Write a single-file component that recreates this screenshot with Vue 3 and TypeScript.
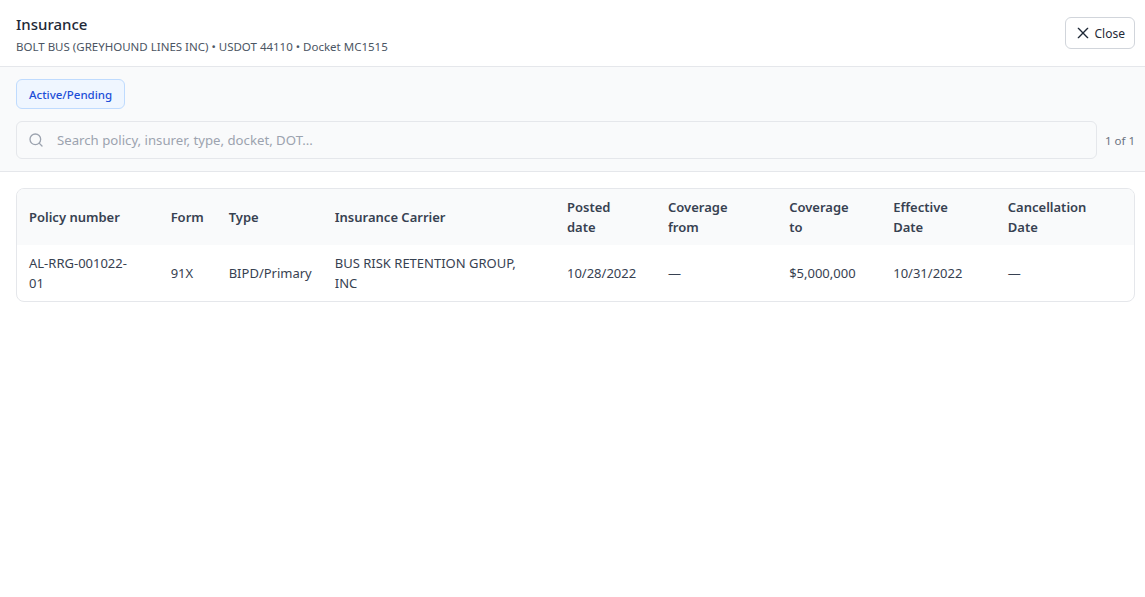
<template>
  <div class="panel">
    <header class="header">
      <div class="titles">
        <h2>Insurance</h2>
        <p>BOLT BUS (GREYHOUND LINES INC) • USDOT 44110 • Docket MC1515</p>
      </div>
      <button class="close-btn" type="button">
        <svg width="16" height="16" viewBox="0 0 24 24" fill="none" stroke="currentColor" stroke-width="2" stroke-linecap="round">
          <path d="M5 5l14 14M19 5L5 19" />
        </svg>
        Close
      </button>
    </header>

    <section class="filters">
      <button class="chip" type="button">Active/Pending</button>
      <div class="search-row">
        <label class="search">
          <svg width="16" height="16" viewBox="0 0 24 24" fill="none" stroke="currentColor" stroke-width="2" stroke-linecap="round">
            <circle cx="11" cy="11" r="8" />
            <path d="M21 21l-4.3-4.3" />
          </svg>
          <input type="text" placeholder="Search policy, insurer, type, docket, DOT..." />
        </label>
        <span class="count">1 of 1</span>
      </div>
    </section>

    <section class="content">
      <div class="table-wrap">
        <table>
          <colgroup>
            <col v-for="c in columns" :key="c.label" :style="{ width: c.width + 'px' }" />
          </colgroup>
          <thead>
            <tr>
              <th v-for="c in columns" :key="c.label">{{ c.label }}</th>
            </tr>
          </thead>
          <tbody>
            <tr v-for="row in rows" :key="row[0]">
              <td v-for="(cell, i) in row" :key="i">{{ cell }}</td>
            </tr>
          </tbody>
        </table>
      </div>
    </section>
  </div>
</template>

<script setup lang="ts">
const columns = [
  { label: 'Policy number', width: 141.5 },
  { label: 'Form', width: 58 },
  { label: 'Type', width: 106 },
  { label: 'Insurance Carrier', width: 232 },
  { label: 'Posted\ndate', width: 101 },
  { label: 'Coverage\nfrom', width: 121 },
  { label: 'Coverage\nto', width: 104 },
  { label: 'Effective\nDate', width: 114.5 },
  { label: 'Cancellation\nDate', width: 138 }
]

const rows = [
  [
    'AL-RRG-001022-\n01',
    '91X',
    'BIPD/Primary',
    'BUS RISK RETENTION GROUP,\nINC',
    '10/28/2022',
    '—',
    '$5,000,000',
    '10/31/2022',
    '—'
  ]
]
</script>

<style>
html,
body {
  background: #fff;
}
</style>

<style scoped>
.panel {
  font-family: "Noto Sans", "Liberation Sans", sans-serif;
  color: #1f2937;
  background: #fff;
}

.header {
  display: flex;
  justify-content: space-between;
  align-items: center;
  height: 66px;
  padding: 0 10px 0 16px;
  border-bottom: 1px solid #e5e7eb;
}

.titles {
  padding-top: 2px;
}

.titles h2 {
  margin: 0 0 5px;
  font-size: 15px;
  line-height: 20px;
  font-weight: 500;
  color: #1f2937;
}

.titles p {
  margin: 0;
  font-size: 11.5px;
  line-height: 16px;
  color: #4b5563;
}

.close-btn {
  display: flex;
  align-items: center;
  gap: 4px;
  height: 32px;
  padding: 0 9px;
  font: inherit;
  font-size: 12px;
  color: #1f2937;
  background: #fff;
  border: 1px solid #d1d5db;
  border-radius: 6px;
}

.filters {
  padding: 12px 10px 12px 16px;
  background: #f9fafb;
  border-bottom: 1px solid #e5e7eb;
}

.chip {
  display: block;
  height: 30px;
  padding: 0 12px;
  font: inherit;
  font-size: 11.5px;
  font-weight: 500;
  color: #1d4ed8;
  background: #eff6ff;
  border: 1px solid #bfdbfe;
  border-radius: 6px;
}

.search-row {
  display: flex;
  align-items: center;
  gap: 8px;
  margin-top: 12px;
}

.search {
  flex: 1;
  display: flex;
  align-items: center;
  gap: 13px;
  height: 38px;
  box-sizing: border-box;
  padding: 0 11px;
  color: #9ca3af;
  background: #f9fafb;
  border: 1px solid #e5e7eb;
  border-radius: 6px;
}

.search input {
  flex: 1;
  min-width: 0;
  padding: 0;
  font: inherit;
  font-size: 13.2px;
  color: #1f2937;
  background: transparent;
  border: none;
  outline: none;
}

.search input::placeholder {
  color: #9ca3af;
  opacity: 1;
}

.count {
  font-size: 11.5px;
  color: #6b7280;
}

.content {
  padding: 16px 10px 16px 16px;
}

.table-wrap {
  border: 1px solid #e5e7eb;
  border-radius: 8px;
  overflow: hidden;
}

table {
  width: 100%;
  table-layout: fixed;
  border-collapse: collapse;
  font-size: 13px;
  line-height: 20px;
}

th {
  height: 56px;
  box-sizing: border-box;
  padding: 8px 12px;
  text-align: left;
  font-weight: 600;
  white-space: pre-line;
  color: #374151;
  background: #f9fafb;
}

td {
  height: 56px;
  box-sizing: border-box;
  padding: 8px 12px;
  white-space: pre-line;
  color: #374151;
}
</style>
